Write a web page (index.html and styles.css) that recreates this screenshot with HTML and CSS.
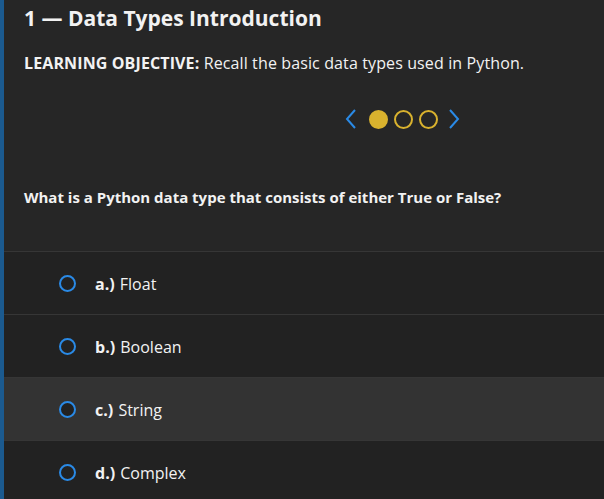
FILE: index.html
```html
<!DOCTYPE html>
<html>
<head>
<meta charset="utf-8">
<link rel="stylesheet" href="styles.css">
</head>
<body>
<div class="page">
  <div class="content">
    <header class="intro">
      <h1 class="title">1 — Data Types Introduction</h1>
      <p class="objective"><b>LEARNING OBJECTIVE:</b> Recall the basic data types used in Python.</p>
      <div class="carousel">
        <svg class="chev" width="12" height="22" viewBox="0 0 12 22"><path d="M10 2 L2 11 L10 20" fill="none" stroke="#2a8ae6" stroke-width="2"/></svg>
        <span class="dot filled"></span>
        <span class="dot"></span>
        <span class="dot"></span>
        <svg class="chev" width="12" height="22" viewBox="0 0 12 22"><path d="M2 2 L10 11 L2 20" fill="none" stroke="#2a8ae6" stroke-width="2"/></svg>
      </div>
      <p class="question">What is a Python data type that consists of either True or False?</p>
    </header>
    <ul class="options">
      <li class="option"><span class="radio"></span><span class="label"><b>a.)</b> Float</span></li>
      <li class="option"><span class="radio"></span><span class="label"><b>b.)</b> Boolean</span></li>
      <li class="option active"><span class="radio"></span><span class="label"><b>c.)</b> String</span></li>
      <li class="option"><span class="radio"></span><span class="label"><b>d.)</b> Complex</span></li>
    </ul>
  </div>
</div>
</body>
</html>
```

FILE: styles.css
```css
html, body {
  margin: 0;
  padding: 0;
  background: #262626;
  height: 100%;
  overflow: hidden;
}
body {
  font-family: "Open Sans", Lato, sans-serif;
  color: #f2f2f2;
}
.page {
  border-left: 4px solid #1b5a8f;
  min-height: 499px;
  box-sizing: border-box;
}
.intro {
  padding: 0 20px;
  border-bottom: 1px solid #363636;
  height: 252px;
  box-sizing: border-box;
}
.title {
  margin: 0;
  padding-top: 5px;
  font-size: 21px;
  line-height: 26px;
  font-weight: 700;
  letter-spacing: 0;
}
.objective {
  margin: 0;
  padding-top: 22px;
  font-size: 16px;
  line-height: 20px;
  letter-spacing: 0.12px;
}
.carousel {
  display: flex;
  align-items: center;
  gap: 6px;
  margin: 34px 0 0 321px;
  height: 24px;
}
.chev { display: block; }
.carousel .chev:first-child { margin-right: 6px; }
.carousel .chev:last-child { margin-left: 4px; }
.dot {
  width: 15px;
  height: 15px;
  border: 2px solid #d9b22e;
  border-radius: 50%;
  display: block;
}
.dot.filled { background: #d9b22e; }
.question {
  margin: 0;
  padding-top: 56px;
  font-size: 15px;
  line-height: 20px;
  font-weight: 700;
}
.options {
  list-style: none;
  margin: 0;
  padding: 0;
  background: #222222;
}
.option {
  display: flex;
  align-items: center;
  border-bottom: 1px solid #363636;
  padding-left: 55px;
  font-size: 16px;
  padding-top: 1px;
  box-sizing: border-box;
  height: 63px;
}
.option.active { background: #333333; }
.radio {
  width: 13px;
  height: 13px;
  border: 2px solid #2a8ae6;
  border-radius: 50%;
  margin-right: 19px;
  background: #222222;
  flex: none;
}
.label b { font-weight: 700; margin-right: 1px; }
```
